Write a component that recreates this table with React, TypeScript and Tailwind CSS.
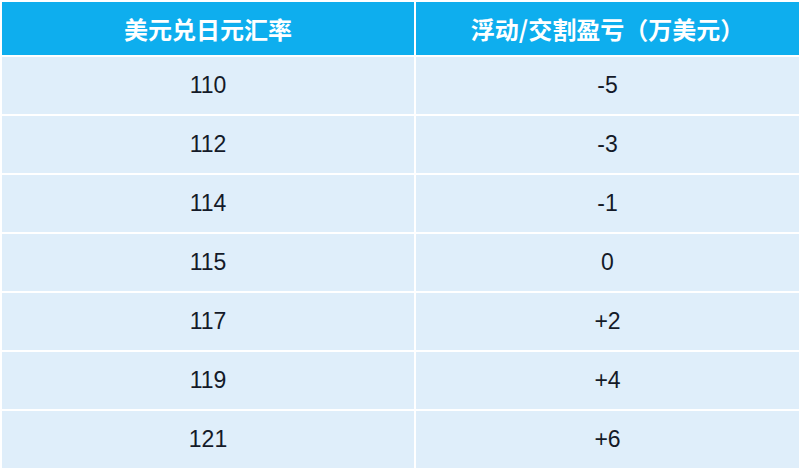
import { Fragment } from "react";

const rows: [string, string][] = [
  ["110", "-5"],
  ["112", "-3"],
  ["114", "-1"],
  ["115", "0"],
  ["117", "+2"],
  ["119", "+4"],
  ["121", "+6"],
];

export default function App() {
  return (
    <div className="w-[800px] h-[472px] bg-white pt-[2px] pl-[2px] font-['Liberation_Sans','Noto_Sans_CJK_SC',sans-serif]">
      <div className="grid grid-cols-[412px_383px] gap-[2px]">
        <div className="h-[53px] flex items-center justify-center bg-[#0eaeee] text-white text-[24px] font-bold font-['Noto_Sans_CJK_SC',sans-serif]">
          美元兑日元汇率
        </div>
        <div className="h-[53px] flex items-center justify-center bg-[#0eaeee] text-white text-[24px] font-bold font-['Noto_Sans_CJK_SC',sans-serif]">
          浮动/交割盈亏（万美元）
        </div>
        {rows.map(([rate, pnl]) => (
          <Fragment key={rate}>
            <div className="h-[57px] flex items-center justify-center bg-[#dfeefa] text-[#141a28] text-[23px]">
              {rate}
            </div>
            <div className="h-[57px] flex items-center justify-center bg-[#dfeefa] text-[#141a28] text-[23px]">
              {pnl}
            </div>
          </Fragment>
        ))}
      </div>
    </div>
  );
}
